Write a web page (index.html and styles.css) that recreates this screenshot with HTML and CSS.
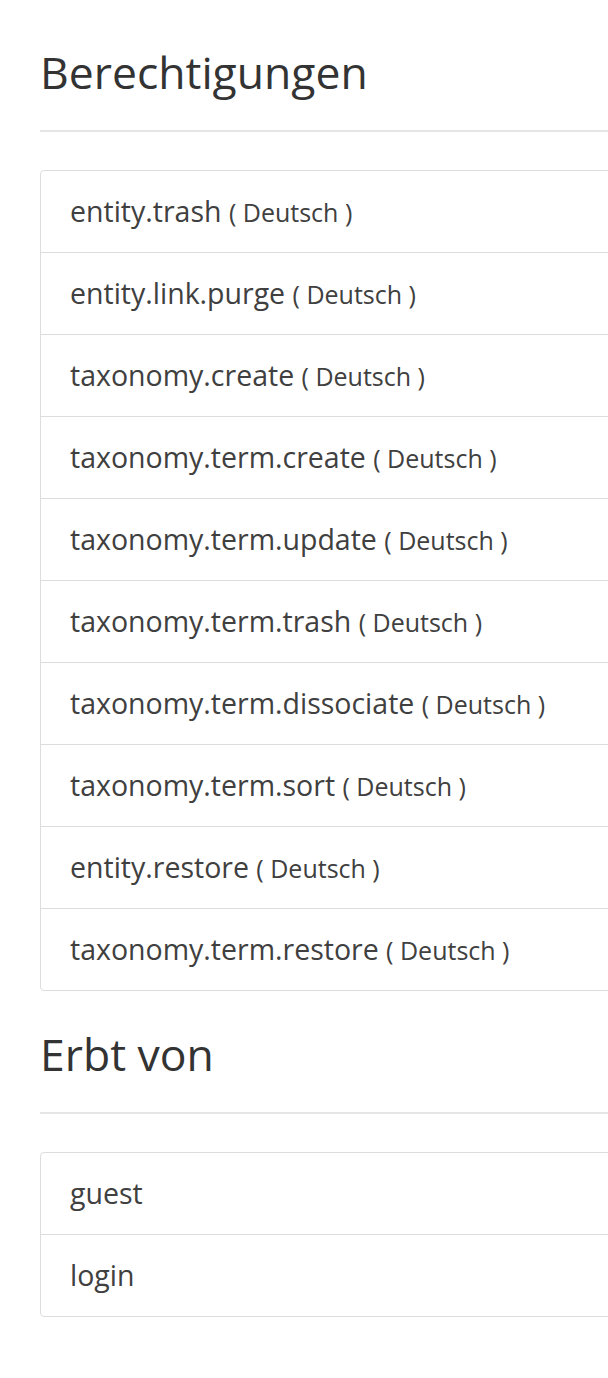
FILE: index.html
```html
<!DOCTYPE html>
<html lang="de">
<head>
<meta charset="utf-8">
<title>Rolle</title>
<link rel="stylesheet" href="styles.css">
</head>
<body>
<div class="page">
  <h2 class="title">Berechtigungen</h2>
  <hr class="rule">
  <ul class="list">
    <li class="item">entity.trash <small class="lang">( Deutsch )</small></li>
    <li class="item">entity.link.purge <small class="lang">( Deutsch )</small></li>
    <li class="item">taxonomy.create <small class="lang">( Deutsch )</small></li>
    <li class="item">taxonomy.term.create <small class="lang">( Deutsch )</small></li>
    <li class="item">taxonomy.term.update <small class="lang">( Deutsch )</small></li>
    <li class="item">taxonomy.term.trash <small class="lang">( Deutsch )</small></li>
    <li class="item">taxonomy.term.dissociate <small class="lang">( Deutsch )</small></li>
    <li class="item">taxonomy.term.sort <small class="lang">( Deutsch )</small></li>
    <li class="item">entity.restore <small class="lang">( Deutsch )</small></li>
    <li class="item">taxonomy.term.restore <small class="lang">( Deutsch )</small></li>
  </ul>
  <h2 class="title title-second">Erbt von</h2>
  <hr class="rule">
  <ul class="list">
    <li class="item">guest</li>
    <li class="item">login</li>
  </ul>
</div>
</body>
</html>
```

FILE: styles.css
```css
html, body {
  margin: 0;
  padding: 0;
  overflow: hidden;
  background: #fff;
}
body {
  font-family: "Open Sans", "Noto Sans", sans-serif;
  color: #333;
}
.page {
  width: 1000px;
  padding: 0 0 0 40px;
}
.title {
  margin: 40px 0 0 0;
  font-size: 44.5px;
  font-weight: 400;
  line-height: 64px;
  color: #333;
}
.title-second {
  margin-top: 31px;
}
.rule {
  margin: 26px 0 38px 0;
  border: 0;
  border-top: 2px solid #e6e6e6;
  height: 0;
}
.list {
  list-style: none;
  margin: 0;
  padding: 0;
  border: 1px solid #ddd;
  border-radius: 4px;
  overflow: hidden;
}
.item {
  padding: 20px 29px;
  font-size: 28.5px;
  line-height: 41px;
  height: 41px;
  color: #404040;
  border-bottom: 1px solid #ddd;
}
.item:last-child {
  border-bottom: 0;
}
.lang {
  font-size: 25px;
  line-height: 1;
  color: #404040;
}
```
